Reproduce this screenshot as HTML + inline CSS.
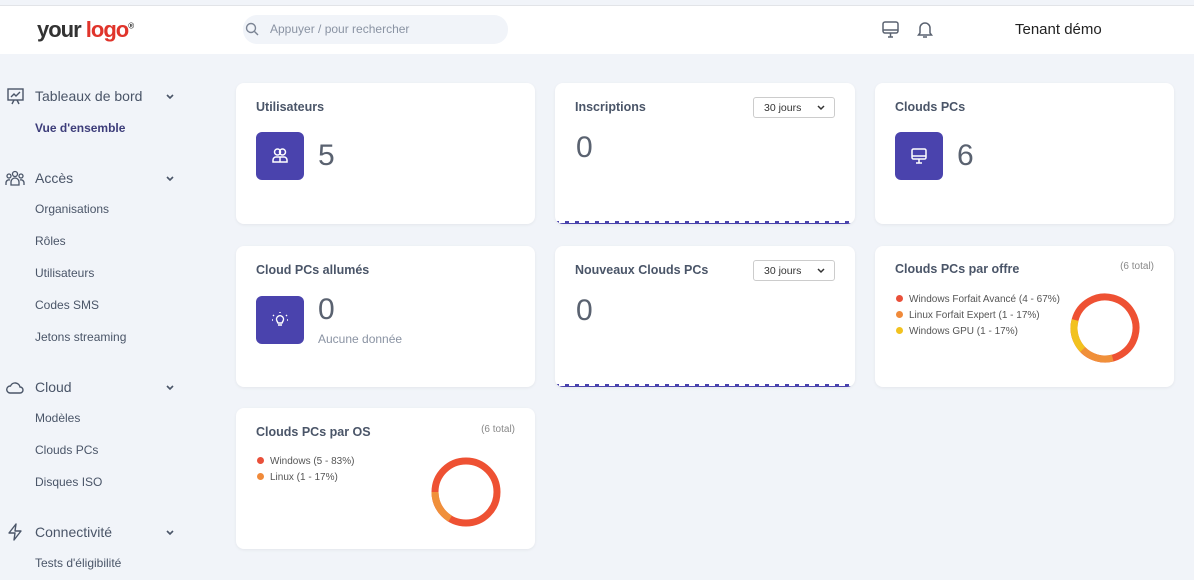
<!DOCTYPE html>
<html><head><meta charset="utf-8"><style>
*{margin:0;padding:0;box-sizing:border-box}
body{width:1194px;height:580px;overflow:hidden;background:#f1f4f9;font-family:"Liberation Sans",sans-serif;position:relative;color:#4a5568}
.a{position:absolute}
.hdr{left:0;top:5px;width:1194px;height:49px;background:#fff;border-top:1px solid #e2e4e8}
.card{position:absolute;background:#fff;border-radius:8px;box-shadow:0 1px 3px rgba(0,0,0,.06)}
.t{position:absolute;left:20px;top:17px;font-size:12.5px;font-weight:bold;color:#4a5568}
.ib{position:absolute;left:20px;width:48px;height:48px;background:#4a43ad;border-radius:6px}
.big{position:absolute;font-size:30px;color:#5a6270}
.nav{position:absolute;left:35px;font-size:14px;color:#4a5568}
.sub{position:absolute;left:35px;font-size:12px;color:#4a5568}
.chev{position:absolute;left:166px;width:8px;height:8px}
.sel{position:absolute;right:20px;top:14px;width:82px;height:21px;border:1px solid #ccc;border-radius:3px;font-size:10.5px;color:#333;padding:4px 0 0 10px}
.wave{position:absolute;left:0;bottom:0;width:100%;height:3px;background:repeating-linear-gradient(90deg,#4a43ad 0 4px,transparent 4px 10px);border-bottom:1px solid #4a43ad}
.lg{position:absolute;font-size:10px;color:#555}
.lg span{display:inline-block;width:7px;height:7px;border-radius:50%;margin-right:6px}
.tot{position:absolute;right:20px;top:17px;font-size:10px;color:#888}
</style></head><body>
<div class="a hdr"></div>
<div class="a" style="left:37px;top:17px;font-size:22px;font-weight:bold;letter-spacing:-1px;color:#333">your <span style="color:#e0342b">logo</span><sup style="font-size:8px;color:#333">®</sup></div>
<div class="a" style="left:243px;top:15px;width:265px;height:29px;background:#f1f4f9;border-radius:14px"></div>
<svg class="a" style="left:245px;top:22px" width="14" height="14" viewBox="0 0 14 14" fill="none" stroke="#7b8494" stroke-width="1.4"><circle cx="6" cy="6" r="4.5"/><path d="M9.5 9.5L13 13"/></svg>
<div class="a" style="left:270px;top:22px;font-size:12px;color:#8a93a3">Appuyer / pour rechercher</div>
<svg class="a" style="left:881px;top:20px" width="19" height="19" viewBox="0 0 19 19" fill="none" stroke="#5a6270" stroke-width="1.5"><rect x="2" y="2" width="15" height="11" rx="2"/><path d="M2 10h15M7 17h5M9.5 13v4"/></svg>
<svg class="a" style="left:916px;top:20px" width="18" height="19" viewBox="0 0 18 19" fill="none" stroke="#5a6270" stroke-width="1.5"><path d="M4 13V8a5 5 0 0 1 10 0v5l1.5 2h-13z M7 17h4"/></svg>
<div class="a" style="left:1015px;top:21px;font-size:15px;color:#222">Tenant démo</div>

<svg class="a" style="left:7px;top:88px" width="17" height="17" viewBox="0 0 17 17" fill="none" stroke="#4a5568" stroke-width="1.4"><rect x="1" y="1" width="15" height="11"/><path d="M4 9l3-3 2 2 4-4M5 16l2-4M12 16l-2-4"/></svg>
<div class="nav" style="top:88px">Tableaux de bord</div>
<svg class="chev" style="top:93px" viewBox="0 0 8 8" fill="none" stroke="#4a5568" stroke-width="1.6"><path d="M1 2l3 3 3-3"/></svg>
<div class="sub" style="top:121px;font-weight:bold;color:#3d3d7a">Vue d'ensemble</div>
<svg class="a" style="left:5px;top:170px" width="20" height="17" viewBox="0 0 20 17" fill="none" stroke="#4a5568" stroke-width="1.3"><circle cx="10" cy="4" r="2.5"/><circle cx="4" cy="6" r="2"/><circle cx="16" cy="6" r="2"/><path d="M6 15v-3a4 4 0 0 1 8 0v3zM1 15v-2a3 3 0 0 1 4-3M19 15v-2a3 3 0 0 0-4-3"/></svg>
<div class="nav" style="top:170px">Accès</div>
<svg class="chev" style="top:175px" viewBox="0 0 8 8" fill="none" stroke="#4a5568" stroke-width="1.6"><path d="M1 2l3 3 3-3"/></svg>
<div class="sub" style="top:202px">Organisations</div>
<div class="sub" style="top:234px">Rôles</div>
<div class="sub" style="top:266px">Utilisateurs</div>
<div class="sub" style="top:298px">Codes SMS</div>
<div class="sub" style="top:330px">Jetons streaming</div>
<svg class="a" style="left:6px;top:380px" width="18" height="14" viewBox="0 0 18 14" fill="none" stroke="#4a5568" stroke-width="1.4"><path d="M4 13h10a3 3 0 0 0 0-6 5 5 0 0 0-9.5-1A3.5 3.5 0 0 0 4 13z"/></svg>
<div class="nav" style="top:379px">Cloud</div>
<svg class="chev" style="top:384px" viewBox="0 0 8 8" fill="none" stroke="#4a5568" stroke-width="1.6"><path d="M1 2l3 3 3-3"/></svg>
<div class="sub" style="top:411px">Modèles</div>
<div class="sub" style="top:443px">Clouds PCs</div>
<div class="sub" style="top:475px">Disques ISO</div>
<svg class="a" style="left:7px;top:523px" width="16" height="18" viewBox="0 0 16 18" fill="none" stroke="#4a5568" stroke-width="1.4" stroke-linejoin="round"><path d="M9 1L2 10h6l-1 7 7-9H8z"/></svg>
<div class="nav" style="top:524px">Connectivité</div>
<svg class="chev" style="top:529px" viewBox="0 0 8 8" fill="none" stroke="#4a5568" stroke-width="1.6"><path d="M1 2l3 3 3-3"/></svg>
<div class="sub" style="top:556px">Tests d'éligibilité</div>

<div class="card" style="left:236px;top:83px;width:299px;height:141px">
<div class="t" style="top:17px">Utilisateurs</div>
<div class="ib" style="top:49px"><svg style="margin:14px" width="20" height="20" viewBox="0 0 20 20" fill="none" stroke="#fff" stroke-width="1.5"><circle cx="7.5" cy="6" r="3"/><circle cx="12.5" cy="6" r="3"/><path d="M3 16v-2a3 3 0 0 1 3-3h8a3 3 0 0 1 3 3v2zM10 11v5"/></svg></div>
<div class="big" style="left:82px;top:56px">5</div>
</div>
<div class="card" style="left:555px;top:83px;width:300px;height:141px;overflow:hidden">
<div class="t">Inscriptions</div>
<div class="sel">30 jours<svg style="position:absolute;right:9px;top:6px" width="8" height="8" viewBox="0 0 8 8" fill="none" stroke="#333" stroke-width="1.5"><path d="M1 2l3 3 3-3"/></svg></div>
<div class="big" style="left:21px;top:48px">0</div>
<div class="wave"></div>
</div>
<div class="card" style="left:875px;top:83px;width:299px;height:141px">
<div class="t">Clouds PCs</div>
<div class="ib" style="top:49px"><svg style="margin:15px" width="18" height="18" viewBox="0 0 18 18" fill="none" stroke="#fff" stroke-width="1.5"><rect x="2" y="2" width="14" height="10" rx="1.5"/><path d="M2 9h14M6 16h6M9 12v4"/></svg></div>
<div class="big" style="left:82px;top:56px">6</div>
</div>

<div class="card" style="left:236px;top:246px;width:299px;height:141px">
<div class="t">Cloud PCs allumés</div>
<div class="ib" style="top:50px"><svg style="margin:14px" width="20" height="20" viewBox="0 0 20 20" fill="none" stroke="#fff" stroke-width="1.4"><path d="M7 11a3.5 3.5 0 1 1 6 0l-1 2H8zM8 15h4M10 2v1M3 5l1 1M17 5l-1 1M2 10h1M17 10h1"/></svg></div>
<div class="big" style="left:82px;top:47px">0</div>
<div class="a" style="left:82px;top:86px;font-size:12px;color:#8a93a3">Aucune donnée</div>
</div>
<div class="card" style="left:555px;top:246px;width:300px;height:141px;overflow:hidden">
<div class="t">Nouveaux Clouds PCs</div>
<div class="sel">30 jours<svg style="position:absolute;right:9px;top:6px" width="8" height="8" viewBox="0 0 8 8" fill="none" stroke="#333" stroke-width="1.5"><path d="M1 2l3 3 3-3"/></svg></div>
<div class="big" style="left:21px;top:48px">0</div>
<div class="wave"></div>
</div>
<div class="card" style="left:875px;top:246px;width:299px;height:141px">
<div class="t" style="top:16px">Clouds PCs par offre</div>
<div class="tot" style="top:15px">(6 total)</div>
<div class="lg" style="left:21px;top:48px"><span style="background:#e9503a"></span>Windows Forfait Avancé (4 - 67%)</div>
<div class="lg" style="left:21px;top:64px"><span style="background:#f08a3a"></span>Linux Forfait Expert (1 - 17%)</div>
<div class="lg" style="left:21px;top:80px"><span style="background:#f2c21f"></span>Windows GPU (1 - 17%)</div>
<svg class="a" style="left:195px;top:47px" width="70" height="70" viewBox="0 0 70 70"><g transform="rotate(195 35 35)" fill="none" stroke-width="7"><circle cx="35" cy="35" r="31" stroke="#ee5133"/><circle cx="35" cy="35" r="31" stroke="#f0903a" stroke-dasharray="32.5 300" stroke-dashoffset="-130"/><circle cx="35" cy="35" r="31" stroke="#f2c21f" stroke-dasharray="32.5 300" stroke-dashoffset="-162.5"/></g></svg>
</div>

<div class="card" style="left:236px;top:408px;width:299px;height:141px">
<div class="t">Clouds PCs par OS</div>
<div class="tot" style="top:16px">(6 total)</div>
<div class="lg" style="left:21px;top:48px"><span style="background:#e9503a"></span>Windows (5 - 83%)</div>
<div class="lg" style="left:21px;top:64px"><span style="background:#f08a3a"></span>Linux (1 - 17%)</div>
<svg class="a" style="left:195px;top:49px" width="70" height="70" viewBox="0 0 70 70"><g transform="rotate(180 35 35)" fill="none" stroke-width="7"><circle cx="35" cy="35" r="31" stroke="#ee5133"/><circle cx="35" cy="35" r="31" stroke="#f0903a" stroke-dasharray="32.5 300" stroke-dashoffset="-162.5"/></g></svg>
</div>
</body></html>
